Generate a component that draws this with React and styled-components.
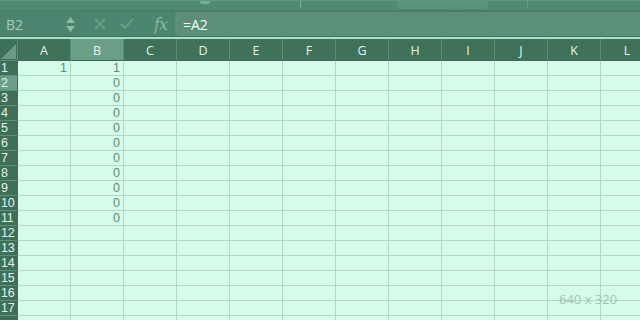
import React from "react";
import styled, { createGlobalStyle } from "styled-components";

const Global = createGlobalStyle`
  html, body { margin: 0; padding: 0; background: #d5fbea; overflow: hidden; }
  * { box-sizing: border-box; }
`;

const Page = styled.div`
  width: 640px;
  height: 320px;
  display: flex;
  flex-direction: column;
  overflow: hidden;
  position: relative;
  font-family: "Open Sans", "Liberation Sans", sans-serif;
  background: #d5fbea;
  & > * { flex: none; }
`;

const TopStrip = styled.div`
  height: 10px;
  background: #4f8a71;
  border-top: 1px solid #5f9a80;
  position: relative;
`;

const StripMark = styled.div`
  position: absolute;
  top: 0;
  left: ${(p) => p.$x}px;
  width: ${(p) => p.$w}px;
  height: ${(p) => p.$h}px;
  background: ${(p) => p.$c};
  border-radius: 0 0 2px 2px;
`;

const Line = styled.div`
  height: ${(p) => p.$h}px;
  background: ${(p) => p.$c};
`;

const FormulaBar = styled.div`
  height: 24px;
  display: flex;
  align-items: stretch;
  background: #4d8670;
`;

const NameBox = styled.div`
  width: 79px;
  display: flex;
  align-items: center;
  justify-content: space-between;
  padding: 1px 4px 0 6px;
  color: #a4cbb9;
  font-size: 14px;
  background: #4c846f;
`;

const Spinner = styled.div`
  display: flex;
  flex-direction: column;
  gap: 3px;
  align-items: center;
`;

const Actions = styled.div`
  width: 96px;
  display: flex;
  align-items: center;
  padding-left: 15px;
  gap: 14px;
`;

const Fx = styled.span`
  font-family: "DejaVu Serif", "Liberation Serif", serif;
  font-style: italic;
  font-size: 16px;
  color: #8bb5a2;
  margin-left: 6px;
  letter-spacing: -1px;
`;

const FormulaInput = styled.div`
  flex: 1;
  background: #5b8f79;
  color: #effff7;
  font-size: 14px;
  display: flex;
  align-items: center;
  padding: 1px 0 0 8px;
  border-radius: 2px 0 0 2px;
`;

const Grid = styled.div`
  display: grid;
  grid-template-columns: 18px repeat(12, 53px);
  grid-template-rows: 22px;
  grid-auto-rows: 15px;
`;

const Corner = styled.div`
  background: #3e7159;
  border-right: 1px solid #5a8c75;
  border-bottom: 1px solid #5a8c75;
  position: relative;
  overflow: hidden;
  &::after {
    content: "";
    position: absolute;
    right: 1px;
    bottom: 1px;
    border-style: solid;
    border-width: 0 0 15px 15px;
    border-color: transparent transparent #6a9b85 transparent;
  }
`;

const ColHead = styled.div`
  background: ${(p) => (p.$sel ? "#6b9e87" : "#3f7259")};
  border-right: 1px solid #5b8f77;
  border-bottom: 1px solid #3b6a54;
  color: #e4f4ec;
  font-size: 12.5px;
  display: flex;
  align-items: center;
  justify-content: center;
  padding-top: 2px;
`;

const RowHead = styled.div`
  background: ${(p) => (p.$sel ? "#6b9e87" : "#3e7058")};
  border-right: 1px solid #3a6a53;
  border-bottom: 1px solid #5d907a;
  color: #e2f2ea;
  font-family: "Liberation Sans", sans-serif;
  font-size: 12.5px;
  line-height: 14px;
  padding-left: 1px;
  white-space: nowrap;
  overflow: hidden;
  letter-spacing: -0.3px;
`;

const Cell = styled.div`
  border-right: 1px solid #acdcc5;
  border-bottom: 1px solid #acdcc5;
  color: #5e8b77;
  font-family: "Liberation Sans", sans-serif;
  font-size: 12.5px;
  line-height: 14px;
  text-align: right;
  padding-right: 3px;
  background: #d5fbea;
`;

const Watermark = styled.div`
  position: absolute;
  left: 559px;
  top: 290px;
  color: #a2c3b4;
  font-size: 13px;
`;

const cols = ["A", "B", "C", "D", "E", "F", "G", "H", "I", "J", "K", "L"];
const data = { 1: { A: "1", B: "1" } };
for (let r = 2; r <= 11; r++) data[r] = { B: "0" };

export default function App() {
  const rows = Array.from({ length: 18 }, (_, i) => i + 1);
  return (
    <Page>
      <Global />
      <TopStrip>
        <StripMark $x={200} $w={10} $h={3} $c="#78ad97" />
        <StripMark $x={300} $w={1} $h={7} $c="#7fb29b" />
        <StripMark $x={397} $w={59} $h={8} $c="#5a947b" />
        <StripMark $x={456} $w={32} $h={8} $c="#5a947b" />
        <StripMark $x={527} $w={1} $h={7} $c="#6aa089" />
      </TopStrip>
      <Line $h={2} $c="#487f67" />
      <FormulaBar>
        <NameBox>
          <span>B2</span>
          <Spinner>
            <svg width="9" height="6" viewBox="0 0 9 6"><path d="M0 6 L4.5 0 L9 6Z" fill="#8fb8a5" /></svg>
            <svg width="9" height="6" viewBox="0 0 9 6"><path d="M0 0 L4.5 6 L9 0Z" fill="#8fb8a5" /></svg>
          </Spinner>
        </NameBox>
        <Actions>
          <svg width="12" height="12" viewBox="0 0 12 12"><path d="M1 1 L11 11 M11 1 L1 11" stroke="#6c9e87" strokeWidth="1.8" /></svg>
          <svg width="14" height="12" viewBox="0 0 14 12"><path d="M1 6 L5 10 L13 1" stroke="#6c9e87" strokeWidth="1.8" fill="none" /></svg>
          <Fx>fx</Fx>
        </Actions>
        <FormulaInput>=A2</FormulaInput>
      </FormulaBar>
      <Line $h={1} $c="#3f7360" />
      <Line $h={2} $c="#a9e0c8" />
      <Grid>
        <Corner />
        {cols.map((c) => (
          <ColHead key={c} $sel={c === "B"}>{c}</ColHead>
        ))}
        {rows.map((r) => (
          <React.Fragment key={r}>
            <RowHead $sel={r === 2}>{r < 18 ? r : ""}</RowHead>
            {cols.map((c) => (
              <Cell key={c}>{(data[r] && data[r][c]) || ""}</Cell>
            ))}
          </React.Fragment>
        ))}
      </Grid>
      <Watermark>640 x 320</Watermark>
    </Page>
  );
}
